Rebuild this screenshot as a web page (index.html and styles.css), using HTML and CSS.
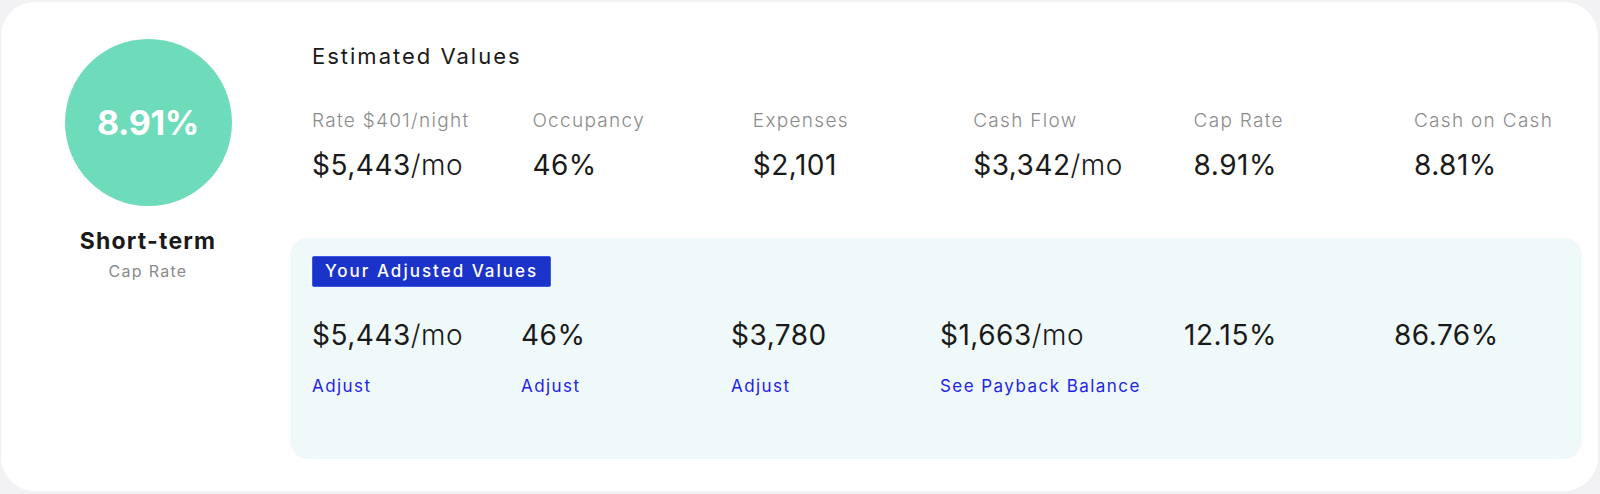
FILE: index.html
```html
<!DOCTYPE html>
<html lang="en">
<head>
    <meta charset="UTF-8">
    <meta name="viewport" content="width=device-width, initial-scale=1.0">
    <title>Short-term Cap Rate</title>
    <link rel="stylesheet" href="styles.css">
</head>
<body>
    <div class="card">
        <div class="score_col">
            <div class="circle">8.91%</div>
            <div class="score_title">Short-term</div>
            <div class="score_sub">Cap Rate</div>
        </div>
        <div class="values_col">
            <h2 class="section_title">Estimated Values</h2>
            <ul class="est_grid">
                <li>
                    <span class="label">Rate $401/night</span>
                    <span class="value">$5,443<small>/mo</small></span>
                </li>
                <li>
                    <span class="label">Occupancy</span>
                    <span class="value">46%</span>
                </li>
                <li>
                    <span class="label">Expenses</span>
                    <span class="value">$2,101</span>
                </li>
                <li>
                    <span class="label">Cash Flow</span>
                    <span class="value">$3,342<small>/mo</small></span>
                </li>
                <li>
                    <span class="label">Cap Rate</span>
                    <span class="value">8.91%</span>
                </li>
                <li>
                    <span class="label">Cash on Cash</span>
                    <span class="value">8.81%</span>
                </li>
            </ul>
            <div class="adjusted_box">
                <span class="badge">Your Adjusted Values</span>
                <ul class="adj_grid">
                    <li>
                        <span class="value">$5,443<small>/mo</small></span>
                        <a href="#" class="link">Adjust</a>
                    </li>
                    <li>
                        <span class="value">46%</span>
                        <a href="#" class="link">Adjust</a>
                    </li>
                    <li>
                        <span class="value">$3,780</span>
                        <a href="#" class="link">Adjust</a>
                    </li>
                    <li>
                        <span class="value">$1,663<small>/mo</small></span>
                        <a href="#" class="link">See Payback Balance</a>
                    </li>
                    <li>
                        <span class="value">12.15%</span>
                    </li>
                    <li>
                        <span class="value">86.76%</span>
                    </li>
                </ul>
            </div>
        </div>
    </div>
</body>
</html>
```

FILE: styles.css
```css
*{margin:0; padding:0; box-sizing: border-box;}
body{
    background-color: #f2f2f4;
    font-family: Inter, "Noto Sans", sans-serif;
    color: #1a1a1a;
}
li{list-style: none;}

.card{
    display: flex;
    margin: 2px 2px 0 1px;
    height: 489px;
    background-color: white;
    border-radius: 34px;
}

/* left: big score circle */
.score_col{
    width: 289px;
    flex-shrink: 0;
    display: flex;
    flex-direction: column;
    align-items: center;
    padding-top: 37px;
    padding-left: 5px;
}
.circle{
    width: 167px;
    height: 167px;
    border-radius: 50%;
    background-color: #6edbba;
    color: white;
    font-size: 34px;
    font-weight: 700;
    letter-spacing: -0.3px;
    display: flex;
    align-items: center;
    justify-content: center;
}
.score_title{
    margin-top: 20px;
    font-size: 23px;
    line-height: 30px;
    font-weight: 700;
    letter-spacing: 1.2px;
}
.score_sub{
    margin-top: 4px;
    font-size: 16px;
    line-height: 22px;
    color: #8b8b8b;
    letter-spacing: 1.3px;
}

/* right: values */
.values_col{
    flex: 1;
    min-width: 0;
    padding: 39px 16px 0 0;
}
.section_title{
    font-size: 22px;
    line-height: 30px;
    font-weight: 400;
    letter-spacing: 2px;
    padding-left: 22px;
}

.est_grid{
    display: grid;
    grid-template-columns: repeat(5, 220.4px) 1fr;
    margin-top: 37px;
    padding-left: 22px;
}
.est_grid li, .adj_grid li{
    display: flex;
    flex-direction: column;
}
.label{
    font-size: 19px;
    line-height: 26px;
    font-weight: 300;
    color: #8b8b8b;
    letter-spacing: 1.3px;
    white-space: nowrap;
}
.value{
    font-size: 28px;
    line-height: 36px;
    letter-spacing: 0.5px;
    white-space: nowrap;
}
.est_grid .value{margin-top: 13px;}
.value small{font-size: 28px; font-weight: 300;}

.adjusted_box{
    margin-top: 55px;
    height: 221px;
    background-color: #f0f9f9;
    border-radius: 18px;
    padding: 18px 22px 0 22px;
}
.badge{
    display: inline-block;
    background-color: #1b33c9;
    border: 1px solid #4058e6;
    color: white;
    font-size: 17px;
    line-height: 29px;
    font-weight: 500;
    letter-spacing: 2px;
    padding: 0 12px 0 12px;
    border-radius: 2px;
}
.adj_grid{
    display: grid;
    grid-template-columns: 209px 210px 209px 244px 210px 1fr;
    margin-top: 30px;
}
.link{
    margin-top: 21px;
    font-size: 17px;
    line-height: 24px;
    color: #1f22e8;
    letter-spacing: 1.45px;
    text-decoration: none;
    white-space: nowrap;
}
```
